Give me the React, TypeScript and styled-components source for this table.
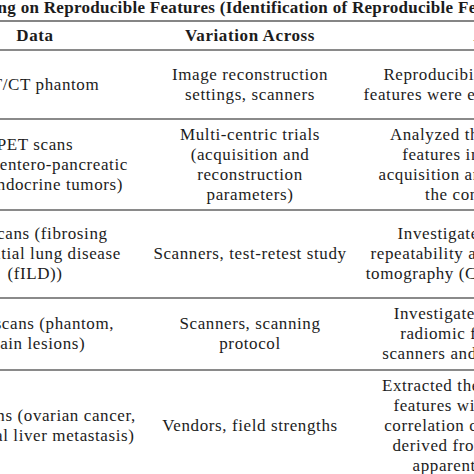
import React from "react";
import styled, { createGlobalStyle } from "styled-components";

const Global = createGlobalStyle`
  html, body { margin: 0; padding: 0; background: #fff; }
  #root { width: 474px; height: 474px; }
`;

const Viewport = styled.div`
  width: 474px;
  height: 474px;
  overflow: hidden;
  background: #fff;
  color: #1c1c1c;
  font-family: "Liberation Serif", "Times New Roman", serif;
  font-size: 17px;
  letter-spacing: 0.6px;
`;

const Sheet = styled.div`
  margin-left: -75px;
  width: 700px;
`;

const Caption = styled.div`
  height: 20px;
  line-height: 16px;
  font-weight: bold;
  white-space: nowrap;
  letter-spacing: 0.3px;
  text-indent: -100px;
`;

const Table = styled.div`
  border-top: 2px solid #858585;
`;

const Row = styled.div<{ $h: number }>`
  display: grid;
  grid-template-columns: 220px 210px 270px;
  align-items: center;
  height: ${(p) => p.$h}px;
  border-bottom: 2px solid #8a8a8a;
`;

const Cell = styled.div<{ $head?: boolean }>`
  text-align: center;
  white-space: nowrap;
  line-height: 20px;
  font-weight: ${(p) => (p.$head ? "bold" : "normal")};
`;

const Line = styled.div``;

type RowData = { h: number; cols: string[][] };

const rows: RowData[] = [
  {
    h: 67,
    cols: [
      ["PET/CT phantom"],
      ["Image reconstruction", "settings, scanners"],
      ["Reproducibility of radiomics", "features were evaluated across CT"],
    ],
  },
  {
    h: 89,
    cols: [
      ["PET scans", "(gastro-entero-pancreatic", "neuroendocrine tumors)"],
      ["Multi-centric trials", "(acquisition and", "reconstruction", "parameters)"],
      [
        "Analyzed the robustness of",
        "features in varying PET",
        "acquisition and reconstruction",
        "the condition sets",
      ],
    ],
  },
  {
    h: 86,
    cols: [
      ["CT scans (fibrosing", "interstitial lung disease", "(fILD))"],
      ["Scanners, test-retest study"],
      [
        "Investigated the feature's",
        "repeatability and reproducibility",
        "tomography (CT) imaging of ILD",
      ],
    ],
  },
  {
    h: 70,
    cols: [
      ["MRI scans (phantom,", "brain lesions)"],
      ["Scanners, scanning", "protocol"],
      ["Investigated the impact of", "radiomic features across", "scanners and scanning setups"],
    ],
  },
  {
    h: 110,
    cols: [
      ["MRI scans (ovarian cancer,", "colorectal liver metastasis)"],
      ["Vendors, field strengths"],
      [
        "Extracted the stable radiomic",
        "features with an intraclass",
        "correlation coefficient (ICC)",
        "derived from an ADC map",
        "apparent diffusion of",
      ],
    ],
  },
];

export default function App() {
  return (
    <>
      <Global />
      <Viewport>
        <Sheet>
          <Caption>
            Table 2. Studies Focusing on Reproducible Features (Identification of Reproducible Features).
          </Caption>
          <Table>
            <Row $h={27}>
              <Cell $head>Data</Cell>
              <Cell $head>Variation Across</Cell>
              <Cell $head>Aim</Cell>
            </Row>
            {rows.map((r, i) => (
              <Row key={i} $h={r.h}>
                {r.cols.map((c, j) => (
                  <Cell key={j}>
                    {c.map((l, k) => (
                      <Line key={k}>{l}</Line>
                    ))}
                  </Cell>
                ))}
              </Row>
            ))}
          </Table>
        </Sheet>
      </Viewport>
    </>
  );
}
